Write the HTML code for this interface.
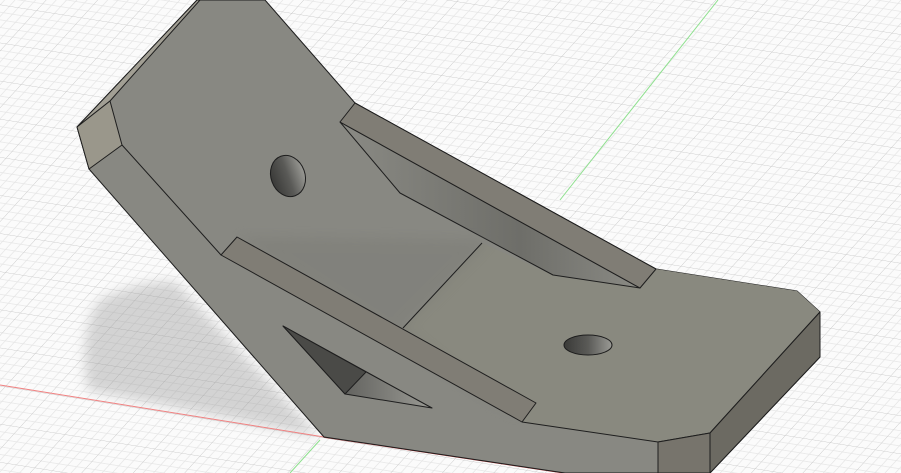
<!DOCTYPE html>
<html><head><meta charset="utf-8"><style>html,body{margin:0;padding:0;background:#fbfbfb;overflow:hidden}svg{display:block}</style></head>
<body>
<svg width="901" height="473" viewBox="0 0 901 473" xmlns="http://www.w3.org/2000/svg">
<defs>
<pattern id="g" width="45" height="45" patternUnits="userSpaceOnUse" patternTransform="matrix(1 0.16 -0.67 0.74 320 437)">
<rect width="45" height="45" fill="#fbfbfb"/>
<g stroke="#e4e4e4" stroke-width="0.8">
<line x1="9" y1="0" x2="9" y2="45"/><line x1="18" y1="0" x2="18" y2="45"/><line x1="27" y1="0" x2="27" y2="45"/><line x1="36" y1="0" x2="36" y2="45"/>
<line y1="9" x1="0" y2="9" x2="45"/><line y1="18" x1="0" y2="18" x2="45"/><line y1="27" x1="0" y2="27" x2="45"/><line y1="36" x1="0" y2="36" x2="45"/>
</g>
<g stroke="#c8c8c8" stroke-width="1"><line x1="0" y1="0" x2="0" y2="45"/><line x1="0" y1="0" x2="45" y2="0"/></g>
</pattern>
<filter id="bl"><feGaussianBlur stdDeviation="6"/></filter>
<linearGradient id="sh1" x1="0" y1="0" x2="1" y2="0"><stop offset="0" stop-color="#8a8a84"/><stop offset="0.6" stop-color="#6e6e69"/><stop offset="1" stop-color="#8a8a84"/></linearGradient>
<linearGradient id="hole" x1="0" y1="0" x2="1" y2="0"><stop offset="0" stop-color="#3a3a38"/><stop offset="0.5" stop-color="#5a5a57"/><stop offset="1" stop-color="#9a9a95"/></linearGradient>
<linearGradient id="tri" x1="0" y1="0" x2="1" y2="0"><stop offset="0" stop-color="#3c3c3a"/><stop offset="1" stop-color="#9a9a94"/></linearGradient>
</defs>
<rect width="901" height="473" fill="url(#g)"/>
<path d="M88,390 Q78,330 100,300 Q140,280 175,282 L320,437 Z" fill="#8c8c8c" opacity="0.35" filter="url(#bl)"/>
<line x1="0" y1="385" x2="324" y2="437" stroke="#f08080" stroke-width="1"/>
<line x1="324" y1="437" x2="565" y2="473" stroke="#c03030" stroke-width="1.5"/>
<line x1="718" y1="0" x2="560" y2="200" stroke="#8ee08e" stroke-width="1"/>
<line x1="320" y1="440" x2="290" y2="473" stroke="#8ee08e" stroke-width="1"/>
<g stroke="#1e1e1e" stroke-width="1" stroke-linejoin="round">
<polygon points="77,127 197,0 265,0 355,103 656,269 797,291 820,312 820,357 710,473 565,473 324,437 89,169" fill="#888882"/>
<polygon points="403,328 482,243 553,275 640,288 656,269 797,291 820,312 710,433 658,442 522,422" fill="#89897f" stroke="none"/>
<polygon points="340,122 400,193 553,275 640,288" fill="url(#sh1)"/>
<polygon points="237,237 490,240 403,328 522,422" fill="#7a7a75" opacity="0.45" stroke="none" filter="url(#bl)"/>
<polygon points="77,127 197,0 200,0 110,101" fill="#a29f94"/>
<polygon points="77,127 110,101 122,145 89,169" fill="#9a978b"/>
<polyline points="122,145 221,255" fill="none"/>
<polygon points="340,122 355,103 656,269 640,288" fill="#807d75"/>
<polygon points="221,255 237,237 536,403 522,422" fill="#807d75"/>
<line x1="403" y1="328" x2="482" y2="243"/>
<polygon points="283,326 345,394 432,408" fill="url(#tri)"/>
<polygon points="283,326 366,372 345,394" fill="#4a4a47"/>
<line x1="366" y1="372" x2="432" y2="408" stroke-width="0.6"/>
<polyline points="522,422 658,442 710,433 820,312" fill="none"/>
<polygon points="658,442 710,433 710,473 658,473" fill="#77746c"/>
<polygon points="710,433 820,312 820,357 710,473" fill="#6c6a62"/>
<ellipse cx="288" cy="176" rx="17" ry="21" transform="rotate(-20 288 176)" fill="url(#hole)"/>
<ellipse cx="588" cy="345" rx="24" ry="10" fill="url(#hole)"/>
</g>
</svg>
</body></html>
